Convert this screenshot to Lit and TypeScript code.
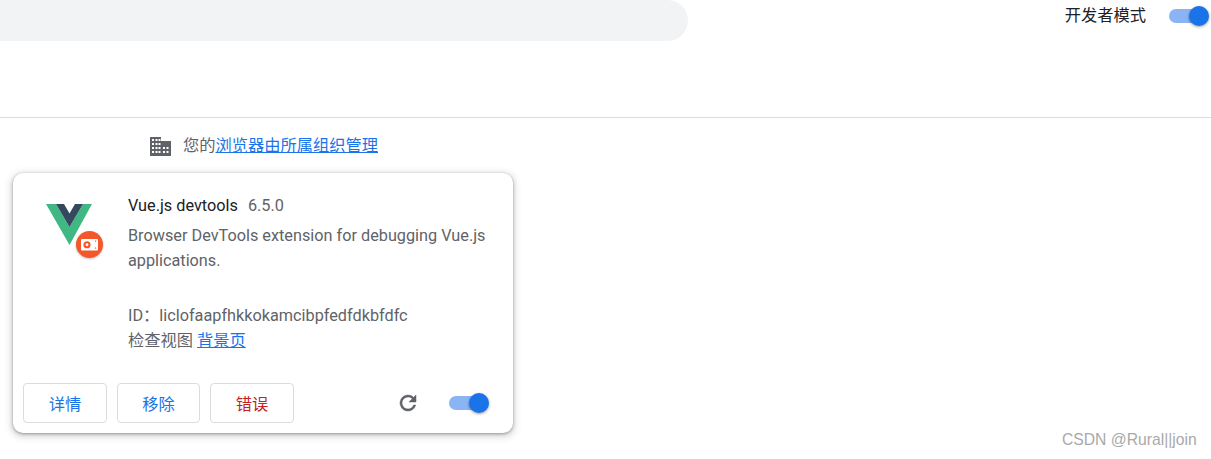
import { LitElement, html, css, svg } from "lit";
import { customElement } from "lit/decorators.js";

const toggle = html`<span class="toggle"><span class="track"></span><span class="knob"></span></span>`;

@customElement("app-root")
export class AppRoot extends LitElement {
  static styles = css`
    :host { display: block; width: 1211px; height: 459px; background: #fff; position: relative; overflow: hidden;
      font-family: Roboto, "Noto Sans CJK SC", sans-serif; font-size: 16.25px; color: #5f6368; }
    .top { height: 41px; display: flex; justify-content: space-between; }
    .search { width: 688px; height: 41px; background: #f1f3f4; border-radius: 0 24px 24px 0; }
    .dev { display: flex; align-items: flex-start; gap: 23px; padding: 6px 2px 0 0; color: #202124; line-height: 20px; }
    .toggle { position: relative; display: inline-block; width: 40px; height: 20px; flex: none; }
    .track { position: absolute; left: 0; top: 3px; width: 34px; height: 14px; border-radius: 7px; background: #8ab4f4; }
    .knob { position: absolute; right: 0; top: 0; width: 20px; height: 20px; border-radius: 50%; background: #1a73e8; box-shadow: 0 1px 3px rgba(0,0,0,.4); }
    .rule { margin-top: 76px; border-top: 1px solid #dadce0; }
    .managed { display: flex; align-items: center; height: 55px; padding-left: 149px; gap: 11px; line-height: 20px; }
    .managed a, .card a { color: #1a73e8; text-decoration: underline; }
    .card { box-sizing: border-box; margin-left: 13px; width: 500px; height: 260px; background: #fff; border-radius: 10px;
      box-shadow: 0 1px 3px rgba(60,64,67,.45), 0 2px 7px 2px rgba(60,64,67,.2); display: flex; flex-direction: column; }
    .main { flex: 1; display: flex; padding: 23px 20px 0 28px; }
    .logo { position: relative; width: 64px; height: 64px; flex: none; margin-right: 23px; }
    .vue { position: absolute; left: 4.500px; top: 8px; }
    .badge { position: absolute; left: 35px; top: 35px; width: 27px; height: 27px; overflow: visible; filter: drop-shadow(0 1px 1px rgba(0,0,0,.25)); }
    .body { flex: 1; line-height: 25px; }
    .name { color: #202124; line-height: 20px; display: flex; gap: 10px; }
    .ver { color: #5f6368; }
    .desc { margin-top: 7px; }
    .id { margin-top: 30px; }
    .foot { height: 50px; display: flex; align-items: flex-start; padding: 0 24px 0 10px; }
    .btn { box-sizing: border-box; height: 40px; border: 1px solid #dadce0; border-radius: 4px; background: #fff; color: #1a73e8;
      display: flex; align-items: center; justify-content: center; margin-right: 10px; }
    .err { color: #c5221f; }
    .spacer { flex: 1; }
    .reload { width: 24px; height: 24px; margin: 8px 29px 0 0; }
    .foot .toggle { margin-top: 10px; }
    .wm { position: absolute; left: 1062px; top: 431px; font-family: "Liberation Sans", sans-serif; font-size: 15.700px; line-height: 18px; color: #a9a9a9; }
  `;

  render() {
    return html`
      <div class="top">
        <div class="search"></div>
        <div class="dev"><span>开发者模式</span>${toggle}</div>
      </div>
      <div class="rule"></div>
      <div class="managed">
        <svg width="23" height="20" viewBox="0 0 23 20"><path fill="#5f6368" d="M1 1h11v4h10v15H1z"/>
          <g fill="#fff">${[3,7].map(y => [3,6.5,9.5].map(x => svg`<rect x="${x}" y="${y}" width="2" height="2"/>`))}
          ${[11,15].map(y => [3,6.5,9.5,14,17.5].map(x => svg`<rect x="${x}" y="${y}" width="2" height="2"/>`))}</g></svg>
        <span>您的<a>浏览器由所属组织管理</a></span>
      </div>
      <div class="card">
        <div class="main">
          <div class="logo">
            <svg class="vue" width="47" height="42" viewBox="0 0 47 42">
              <path fill="#41b883" d="M0 0h10l13.500 23L37 0h9L23.500 41z"/>
              <path fill="#34495e" d="M10 0h8l5.500 9.500L29 0h8L23.500 23z"/>
            </svg>
            <svg class="badge" viewBox="0 0 27 27">
              <circle cx="13.500" cy="13.500" r="13.500" fill="#f4572a"/>
              <rect x="5" y="8" width="17" height="11.500" rx="1" fill="#fff"/>
              <circle cx="11" cy="13.750" r="3.600" fill="#f4572a"/><circle cx="11" cy="13.750" r="1.400" fill="#fff"/>
              <rect x="19" y="9.500" width="1.200" height="1.200" fill="#f4572a"/><rect x="19" y="16.500" width="1.200" height="1.200" fill="#f4572a"/>
            </svg>
          </div>
          <div class="body">
            <div class="name"><span>Vue.js devtools</span><span class="ver">6.5.0</span></div>
            <div class="desc">Browser DevTools extension for debugging Vue.js applications.</div>
            <div class="id">ID：liclofaapfhkkokamcibpfedfdkbfdfc</div>
            <div>检查视图 <a>背景页</a></div>
          </div>
        </div>
        <div class="foot">
          <div class="btn" style="width:84px">详情</div>
          <div class="btn" style="width:83px">移除</div>
          <div class="btn err" style="width:84px">错误</div>
          <div class="spacer"></div>
          <svg class="reload" viewBox="0 0 24 24"><path fill="#5f6368" stroke="#5f6368" stroke-width=".5" d="M17.650 6.350A7.960 7.960 0 0 0 12 4a8 8 0 1 0 7.730 10h-2.080A6 6 0 1 1 12 6c1.660 0 3.140.69 4.220 1.780L13 11h7V4z"/></svg>
          ${toggle}
        </div>
      </div>
      <div class="wm">CSDN @Rural||join</div>
    `;
  }
}
